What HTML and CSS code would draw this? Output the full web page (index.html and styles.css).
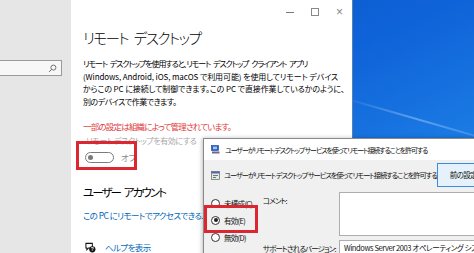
FILE: index.html
```html
<!DOCTYPE html>
<html lang="ja">
<head>
  <meta charset="utf-8">
  <title>リモート デスクトップ</title>
  <link rel="stylesheet" href="styles.css">
</head>
<body>
  <div class="desktop">
    <div class="streak"></div>
  </div>

  <!-- Settings window -->
  <div class="settings">
    <div class="nav">
      <div class="search">
        <svg class="search-icon" viewBox="0 0 10 10">
          <circle cx="6" cy="4" r="2.8" fill="none" stroke="#555" stroke-width="0.9"/>
          <path d="M4 6 L1.2 8.8" stroke="#555" stroke-width="1"/>
        </svg>
      </div>
    </div>

    <div class="content">
      <div class="caption">
        <span class="cap-btn"><span class="cap-min"></span></span>
        <span class="cap-btn"><span class="cap-max"></span></span>
        <span class="cap-btn cap-close">×</span>
      </div>

      <h1 class="page-title">リモート デスクトップ</h1>

      <p class="desc">
        <span class="desc-line kana">リモート デスクトップを使用すると、リモート デスクトップ クライアント アプリ</span>
        <span class="desc-line">(Windows, Android, iOS, macOS で利用可能) を使用してリモート デバイス</span>
        <span class="desc-line">からこの PC に接続して制御できます。この PC で直接作業しているかのように、</span>
        <span class="desc-line tight">別のデバイスで作業できます。</span>
      </p>

      <p class="managed">一部の設定は組織によって管理されています。</p>
      <p class="disabled-label">リモート デスクトップを有効にする</p>

      <div class="toggle-row">
        <span class="toggle"><span class="knob"></span></span>
        <span class="toggle-text">オフ</span>
      </div>

      <h2 class="section-title">ユーザー アカウント</h2>
      <a class="link">この PC にリモートでアクセスできるユーザーを選択</a>

      <div class="help-row">
        <svg class="help-icon" viewBox="0 0 12 12">
          <path d="M1 1.5 H8 V6.5 H4 L2 8.5 V6.5 H1 Z" fill="none" stroke="#111" stroke-width="1.1"/>
          <circle cx="8" cy="8" r="3.4" fill="#111"/>
          <text x="8" y="10.2" font-size="5.5" font-family="Liberation Sans, sans-serif" font-weight="700" fill="#fff" text-anchor="middle">?</text>
        </svg>
        <a class="link">ヘルプを表示</a>
      </div>
    </div>
  </div>

  <!-- Group policy dialog -->
  <div class="dialog">
    <div class="dlg-title">
      <svg class="dlg-icon" viewBox="0 0 9 9">
        <rect x="0.5" y="0.5" width="7" height="5" fill="#2b5fc7" stroke="#1b3f8f" stroke-width="0.6"/>
        <rect x="2" y="1.6" width="4" height="2.6" fill="#9cc4ff"/>
        <rect x="1" y="6.5" width="7.5" height="2" fill="#6b6b8f"/>
      </svg>
      <span>ユーザーがリモート デスクトップ サービスを使ってリモート接続することを許可する</span>
    </div>

    <div class="dlg-body">
      <div class="dlg-head">
        <svg class="dlg-icon" viewBox="0 0 9 9">
          <rect x="0.5" y="0.5" width="8" height="8" fill="#e8e8e8" stroke="#666" stroke-width="0.7"/>
          <rect x="0.5" y="0.5" width="8" height="2" fill="#4a6fa8"/>
          <rect x="2" y="4" width="5" height="1" fill="#777"/>
          <rect x="2" y="6" width="3" height="1" fill="#3a9a4a"/>
        </svg>
        <span class="dlg-head-text">ユーザーがリモート デスクトップ サービスを使ってリモート接続することを許可する</span>
        <span class="dlg-button">前の設定(P)</span>
      </div>

      <div class="dlg-main">
        <div class="radios">
          <label class="radio"><span class="dot"></span>未構成(C)</label>
          <label class="radio checked"><span class="dot"></span>有効(E)</label>
          <label class="radio"><span class="dot"></span>無効(D)</label>
        </div>
        <div class="fields">
          <span class="field-label">コメント:</span>
          <div class="comment-box"></div>
          <span class="field-label">サポートされるバージョン:</span>
          <div class="support-box">Windows Server 2003 オペレーティング システム<br>以降</div>
        </div>
      </div>
    </div>
  </div>

  <!-- Highlight marks -->
  <div class="mark mark-toggle"></div>
  <div class="mark mark-radio"></div>
</body>
</html>
```

FILE: styles.css
```css
:root {
  --nav: #e6e6e6;
  --text: #000;
  --red: #e0393e;
  --link: #0067b8;
  --muted: #a8a8a8;
  --mark: #dc2630;
  --dlg-bg: #f0f0f0;
}

body {
  position: relative;
  width: 474px;
  height: 253px;
  margin: 0;
  overflow: hidden;
  font-family: "Noto Sans CJK JP", "Noto Sans", sans-serif;
  font-feature-settings: "palt";
  color: var(--text);
  background: #0d5ad2;
}

p,
h1,
h2 {
  margin: 0;
}

/* Desktop wallpaper */
.desktop {
  position: absolute;
  top: 0;
  left: 0;
  right: 0;
  bottom: 0;
  background: linear-gradient(155deg, #0b4fc4 0%, #0f63d8 45%, #1d7fe6 80%, #2a8fee 100%);
  overflow: hidden;
}

.streak {
  position: absolute;
  left: 340px;
  top: 96px;
  width: 160px;
  height: 2px;
  background: linear-gradient(to right, rgba(255, 255, 255, 0), rgba(180, 215, 255, 0.45), rgba(255, 255, 255, 0.1));
  transform: rotate(16deg);
  transform-origin: left center;
}

/* Settings window */
.settings {
  position: absolute;
  top: 0;
  left: 0;
  width: 352px;
  height: 253px;
  display: flex;
  border-right: 1px solid #5a7fb5;
}

.nav {
  flex: none;
  width: 71px;
  background: var(--nav);
  padding-top: 60px;
}

.search {
  position: relative;
  width: 61px;
  height: 14px;
  margin-left: -1px;
  border: 1px solid #9a9a9a;
  background: #f7f7f7;
}

.search-icon {
  position: absolute;
  right: 4px;
  top: 3px;
  width: 9px;
  height: 9px;
}

.content {
  flex: 1;
  min-width: 0;
  overflow: hidden;
  background: #fff;
  padding-left: 12px;
}

.caption {
  display: flex;
  justify-content: flex-end;
  height: 24px;
}

.cap-btn {
  width: 25px;
  display: flex;
  align-items: center;
  justify-content: center;
  color: #777;
}

.cap-min {
  width: 8px;
  height: 1px;
  background: #777;
}

.cap-max {
  width: 6px;
  height: 6px;
  border: 1px solid #888;
}

.cap-close {
  font-family: "Liberation Sans", sans-serif;
  font-size: 12px;
  font-weight: 300;
  color: #888;
}

.page-title {
  margin-top: 1px;
  font-size: 14.5px;
  line-height: 26px;
  font-weight: 300;
  letter-spacing: -1.5px;
  word-spacing: 4px;
}

.desc {
  margin-top: 7px;
  font-size: 8px;
  line-height: 12.5px;
  white-space: nowrap;
}

.desc-line {
  display: block;
  letter-spacing: -0.1px;
}

.desc-line.kana {
  letter-spacing: -1.05px;
  word-spacing: 2px;
}

.desc-line.tight {
  letter-spacing: -0.5px;
}

.managed {
  margin-top: 12px;
  font-size: 8.5px;
  line-height: 12.5px;
  letter-spacing: -0.8px;
  color: var(--red);
  white-space: nowrap;
}

.disabled-label {
  margin-top: 2px;
  margin-left: 3px;
  font-size: 8px;
  line-height: 12.5px;
  letter-spacing: -0.4px;
  color: var(--muted);
  white-space: nowrap;
}

.toggle-row {
  display: flex;
  align-items: center;
  gap: 7px;
  height: 14px;
  margin-top: 3px;
  margin-left: 2px;
}

.toggle {
  display: flex;
  align-items: center;
  width: 23px;
  height: 9px;
  padding: 0 2px;
  border: 1.5px solid #7a7a7a;
  border-radius: 7px;
}

.knob {
  width: 5px;
  height: 5px;
  border-radius: 50%;
  background: #7a7a7a;
}

.toggle-text {
  font-size: 8.5px;
  letter-spacing: -0.3px;
  color: #8a8a8a;
}

.section-title {
  margin-top: 18px;
  font-size: 11.5px;
  line-height: 20px;
  font-weight: 400;
  letter-spacing: -1.9px;
  word-spacing: 3px;
}

.link {
  display: block;
  font-size: 8.5px;
  line-height: 13px;
  letter-spacing: -0.6px;
  color: var(--link);
  white-space: nowrap;
}

.content > .link {
  margin-top: 7px;
}

.help-row {
  display: flex;
  align-items: center;
  gap: 9px;
  margin-top: 19px;
  margin-left: 2px;
}

.help-icon {
  width: 11px;
  height: 11px;
}

/* Group policy dialog */
.dialog {
  position: absolute;
  left: 203px;
  top: 138px;
  width: 300px;
  height: 130px;
  border: 1px solid #8a8a8a;
  background: var(--dlg-bg);
  box-shadow: -1px 0 4px rgba(0, 0, 0, 0.25);
  font-size: 7px;
  letter-spacing: -1.1px;
  color: #111;
}

.dlg-title {
  display: flex;
  align-items: center;
  gap: 5px;
  height: 21px;
  padding-left: 7px;
  background: #fff;
  white-space: nowrap;
}

.dlg-icon {
  width: 9px;
  height: 9px;
  flex: none;
}

.dlg-body {
  padding-left: 7px;
}

.dlg-head {
  display: flex;
  align-items: center;
  height: 30px;
  white-space: nowrap;
}

.dlg-head-text {
  margin-left: 4px;
  font-size: 7.3px;
}

.dlg-button {
  margin-left: auto;
  margin-right: 4px;
  width: 52px;
  height: 22px;
  line-height: 22px;
  padding-left: 12px;
  border: 1px solid #3d8ad8;
  background: #e5f1fb;
  font-size: 7.5px;
  letter-spacing: -0.6px;
}

.dlg-main {
  display: flex;
  margin-top: 2px;
}

.radios {
  width: 52px;
  padding-top: 5px;
  display: flex;
  flex-direction: column;
  gap: 5px;
}

.radio {
  display: flex;
  align-items: center;
  gap: 4px;
  height: 12px;
  font-size: 7.5px;
  letter-spacing: -0.7px;
  white-space: nowrap;
}

.dot {
  display: flex;
  align-items: center;
  justify-content: center;
  width: 7px;
  height: 7px;
  border: 1px solid #333;
  border-radius: 50%;
  background: #fff;
}

.radio.checked .dot::after {
  content: "";
  width: 4px;
  height: 4px;
  border-radius: 50%;
  background: #222;
}

.fields {
  display: grid;
  grid-template-columns: 76px 1fr;
  row-gap: 4px;
  align-items: start;
}

.field-label {
  padding-top: 3px;
  font-size: 7.5px;
  letter-spacing: -0.9px;
  white-space: nowrap;
}

.comment-box {
  height: 42px;
  border: 1px solid #adadad;
  background: #fff;
}

.support-box {
  height: 30px;
  padding: 2px 4px;
  border: 1px solid #adadad;
  background: #fff;
  font-size: 7.5px;
  line-height: 10px;
  letter-spacing: -0.4px;
  white-space: nowrap;
}

/* Red highlight marks */
.mark {
  position: absolute;
  border: 3px solid var(--mark);
}

.mark-toggle {
  left: 76px;
  top: 141px;
  width: 55px;
  height: 23px;
}

.mark-radio {
  left: 204px;
  top: 205px;
  width: 48px;
  height: 22px;
}
```
